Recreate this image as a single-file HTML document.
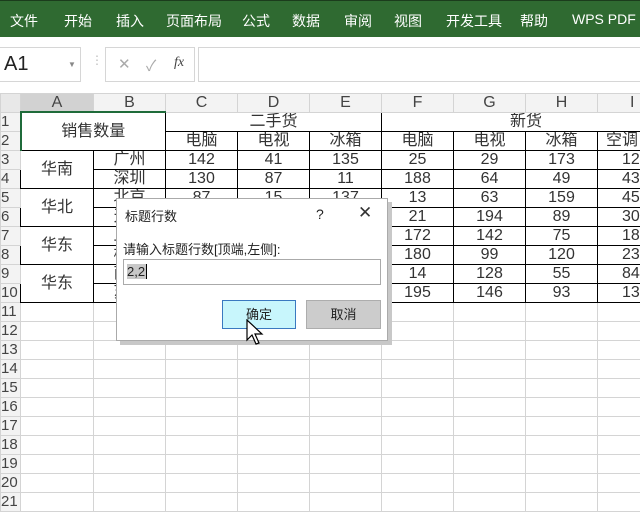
<!DOCTYPE html>
<html><head><meta charset="utf-8"><style>
*{margin:0;padding:0;box-sizing:border-box}
body{width:640px;height:513px;overflow:hidden;background:#fff;font-family:"Liberation Sans","Noto Sans CJK SC",sans-serif;position:relative;color:#222}
.rib{position:absolute;left:0;top:0;width:640px;height:37px;background:#2f6a31;border-top:1px solid #1b3c1c}
.rib span{position:absolute;top:10px;color:#fff;font-size:14px}
.fb{position:absolute;top:37px;left:0;width:640px;height:56px;background:#fff}
.box{position:absolute;border:1px solid #d6d6d6;background:#fff}
table{position:absolute;left:0;top:93px;width:647px;border-collapse:collapse;table-layout:fixed;font-size:16px}
td{border:1px solid #d4d4d4;height:19px;text-align:center;padding:0;line-height:17px;white-space:nowrap;overflow:hidden;color:#333}
tr.h td{height:18px;background:#f3f3f3;color:#444;font-size:16px}
td.rh{background:#f3f3f3;text-align:left;padding-left:0;color:#444;font-size:15px}
.b{border:1px solid #000}
.dlg{position:absolute;left:116px;top:198px;width:272px;height:143px;background:#fff;border:1px solid #aaa;box-shadow:4px 4px 0 #c8c8c8;font-size:13px}
</style></head><body>
<div class="rib">
<span style="left:10px">文件</span><span style="left:64px">开始</span><span style="left:116px">插入</span><span style="left:166px">页面布局</span><span style="left:242px">公式</span><span style="left:292px">数据</span><span style="left:344px">审阅</span><span style="left:394px">视图</span><span style="left:446px">开发工具</span><span style="left:520px">帮助</span><span style="left:572px">WPS PDF</span>
</div>
<div class="fb">
<div class="box" style="left:-1px;top:10px;width:82px;height:35px"><span style="position:absolute;left:4px;top:5px;font-size:20px;color:#222">A1</span><span style="position:absolute;left:68px;top:12px;font-size:8px;color:#888">▼</span></div>
<span style="position:absolute;left:91px;top:16px;color:#bbb;font-size:12px">⋮</span>
<div class="box" style="left:105px;top:10px;width:90px;height:35px"><span style="position:absolute;left:12px;top:7px;color:#aaa;font-size:15px">✕</span><span style="position:absolute;left:40px;top:7px;color:#aaa;font-size:15px">✓</span><span style="position:absolute;left:68px;top:7px;color:#444;font-size:14px;font-style:italic;font-family:'Liberation Serif',serif">fx</span></div>
<div class="box" style="left:198px;top:10px;width:450px;height:35px"></div>
</div>
<table>
<colgroup><col style="width:20px"><col style="width:73px"><col style="width:72px"><col style="width:72px"><col style="width:72px"><col style="width:72px"><col style="width:72px"><col style="width:72px"><col style="width:72px"><col style="width:50px"></colgroup>
<tr class="h"><td style="background:#e8e8e8"></td><td style="background:#d2d2d2">A</td><td>B</td><td>C</td><td>D</td><td>E</td><td>F</td><td>G</td><td>H</td><td style="text-align:left;padding-left:32px">I</td></tr>
<tr><td class="rh">1</td><td colspan="2" rowspan="2" class="b" style="border-top:2px solid #1f6b3a;border-left:2px solid #1f6b3a;vertical-align:middle">销售数量</td><td colspan="3" class="b">二手货</td><td colspan="4" class="b" style="text-align:left;padding-left:128px">新货</td></tr>
<tr><td class="rh">2</td><td class="b">电脑</td><td class="b">电视</td><td class="b">冰箱</td><td class="b">电脑</td><td class="b">电视</td><td class="b">冰箱</td><td class="b" style="text-align:left;padding-left:8px">空调</td></tr>
<tr><td class="rh">3</td><td rowspan="2" class="b">华南</td><td class="b">广州</td><td class="b">142</td><td class="b">41</td><td class="b">135</td><td class="b">25</td><td class="b">29</td><td class="b">173</td><td class="b" style="text-align:left;padding-left:24px">123</td></tr>
<tr><td class="rh">4</td><td class="b">深圳</td><td class="b">130</td><td class="b">87</td><td class="b">11</td><td class="b">188</td><td class="b">64</td><td class="b">49</td><td class="b" style="text-align:left;padding-left:24px">43</td></tr>
<tr><td class="rh">5</td><td rowspan="2" class="b">华北</td><td class="b">北京</td><td class="b">87</td><td class="b">15</td><td class="b">137</td><td class="b">13</td><td class="b">63</td><td class="b">159</td><td class="b" style="text-align:left;padding-left:24px">45</td></tr>
<tr><td class="rh">6</td><td class="b">天津</td><td class="b">66</td><td class="b">52</td><td class="b">90</td><td class="b">21</td><td class="b">194</td><td class="b">89</td><td class="b" style="text-align:left;padding-left:24px">30</td></tr>
<tr><td class="rh">7</td><td rowspan="2" class="b">华东</td><td class="b">上海</td><td class="b">55</td><td class="b">80</td><td class="b">61</td><td class="b">172</td><td class="b">142</td><td class="b">75</td><td class="b" style="text-align:left;padding-left:24px">180</td></tr>
<tr><td class="rh">8</td><td class="b">杭州</td><td class="b">70</td><td class="b">33</td><td class="b">48</td><td class="b">180</td><td class="b">99</td><td class="b">120</td><td class="b" style="text-align:left;padding-left:24px">23</td></tr>
<tr><td class="rh">9</td><td rowspan="2" class="b">华东</td><td class="b">南京</td><td class="b">90</td><td class="b">62</td><td class="b">77</td><td class="b">14</td><td class="b">128</td><td class="b">55</td><td class="b" style="text-align:left;padding-left:24px">84</td></tr>
<tr><td class="rh">10</td><td class="b">苏州</td><td class="b">44</td><td class="b">28</td><td class="b">101</td><td class="b">195</td><td class="b">146</td><td class="b">93</td><td class="b" style="text-align:left;padding-left:24px">134</td></tr>
<tr><td class="rh">11</td><td></td><td></td><td></td><td></td><td></td><td></td><td></td><td></td><td></td></tr>
<tr><td class="rh">12</td><td></td><td></td><td></td><td></td><td></td><td></td><td></td><td></td><td></td></tr>
<tr><td class="rh">13</td><td></td><td></td><td></td><td></td><td></td><td></td><td></td><td></td><td></td></tr>
<tr><td class="rh">14</td><td></td><td></td><td></td><td></td><td></td><td></td><td></td><td></td><td></td></tr>
<tr><td class="rh">15</td><td></td><td></td><td></td><td></td><td></td><td></td><td></td><td></td><td></td></tr>
<tr><td class="rh">16</td><td></td><td></td><td></td><td></td><td></td><td></td><td></td><td></td><td></td></tr>
<tr><td class="rh">17</td><td></td><td></td><td></td><td></td><td></td><td></td><td></td><td></td><td></td></tr>
<tr><td class="rh">18</td><td></td><td></td><td></td><td></td><td></td><td></td><td></td><td></td><td></td></tr>
<tr><td class="rh">19</td><td></td><td></td><td></td><td></td><td></td><td></td><td></td><td></td><td></td></tr>
<tr><td class="rh">20</td><td></td><td></td><td></td><td></td><td></td><td></td><td></td><td></td><td></td></tr>
<tr><td class="rh">21</td><td></td><td></td><td></td><td></td><td></td><td></td><td></td><td></td><td></td></tr>
</table>
<div class="dlg">
<span style="position:absolute;left:8px;top:7px">标题行数</span>
<span style="position:absolute;left:199px;top:7px;font-size:14px">?</span>
<span style="position:absolute;left:241px;top:4px;font-size:17px;color:#333">✕</span>
<span style="position:absolute;left:6px;top:40px">请输入标题行数[顶端,左侧]:</span>
<div style="position:absolute;left:6px;top:60px;width:258px;height:26px;border:1px solid #aaa"><span style="position:absolute;left:3px;top:4px;background:#c8c8c8;font-size:13px;padding-right:1px;border-right:1px solid #000">2,2</span></div>
<div style="position:absolute;left:105px;top:101px;width:74px;height:29px;background:#c8f6fc;border:1px solid #3a79c0;text-align:center;line-height:27px">确定</div>
<div style="position:absolute;left:189px;top:101px;width:75px;height:29px;background:#cccccc;border:1px solid #adadad;text-align:center;line-height:27px">取消</div>
</div>
<svg style="position:absolute;left:246px;top:319px" width="18" height="28" viewBox="0 0 18 28"><path d="M1 1 L1 21 L6 16 L10 25 L13 24 L9 15 L16 15 Z" fill="#fff" stroke="#000" stroke-width="1.2"/></svg>
</body></html>
